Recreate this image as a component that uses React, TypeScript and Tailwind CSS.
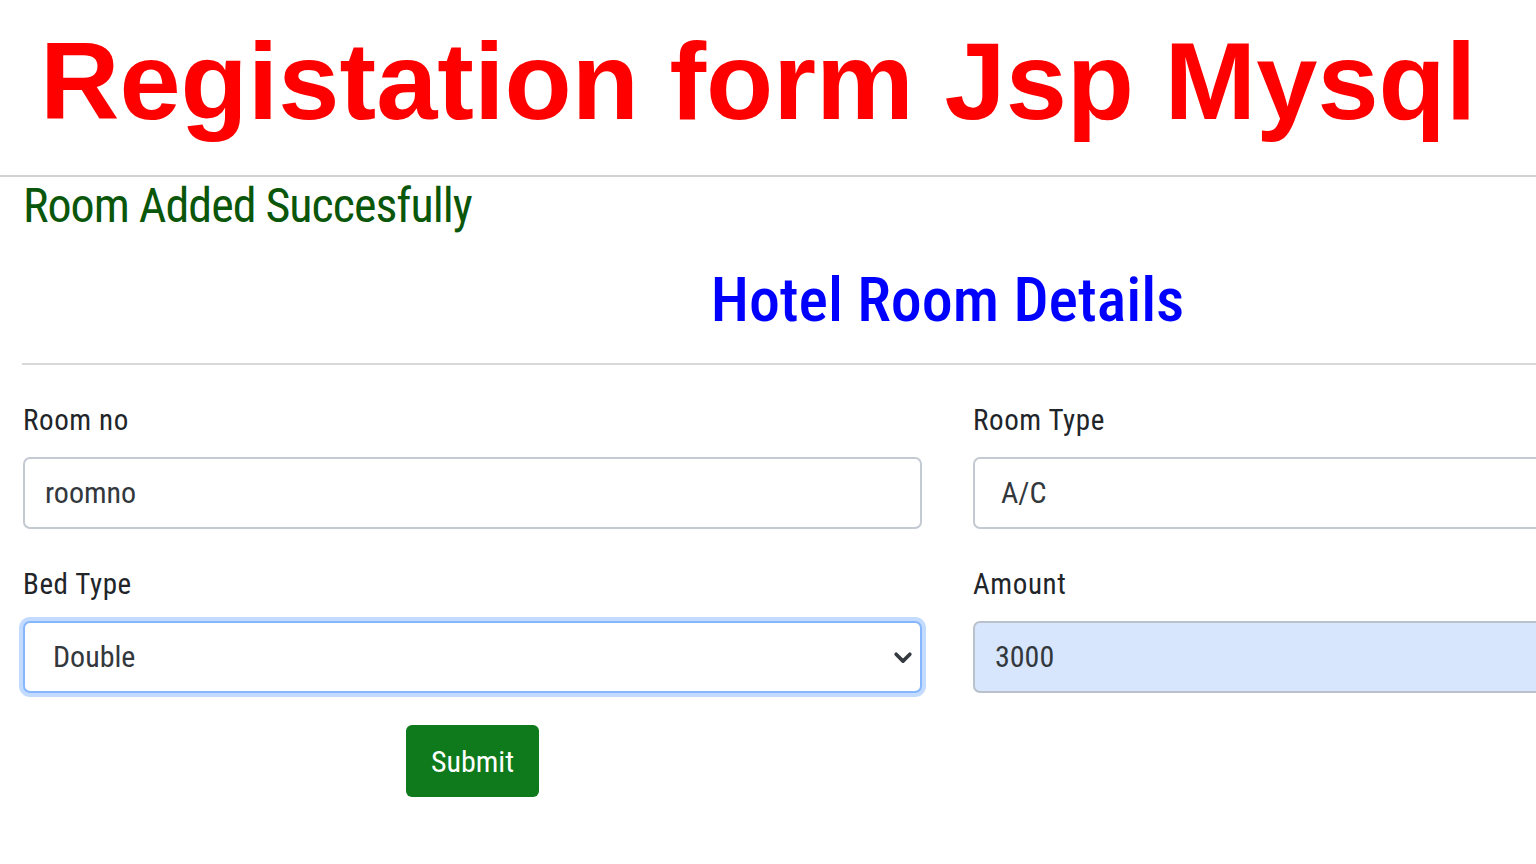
import React from "react";

const ui = { fontFamily: 'Roboto, "Open Sans", sans-serif' };

function Field({
  label,
  value,
  pad,
  bg,
  focus,
  select,
}: {
  label: string;
  value: string;
  pad: string;
  bg?: boolean;
  focus?: boolean;
  select?: boolean;
}) {
  return (
    <div className="flex flex-col">
      <div className="text-[29px] leading-none h-[28px] text-[#212529] font-stretch-condensed tracking-[0.6px]">{label}</div>
      <div
        className={
          "mt-[23px] h-[72px] rounded-[7px] flex items-center relative " +
          (focus
            ? "border-2 border-[#86b7fe] shadow-[0_0_0_4px_rgba(13,110,253,0.25)] bg-white"
            : bg
            ? "border-2 border-[#b9c1ca] bg-[#d8e6fd]"
            : "border-2 border-[#c4cad2] bg-white")
        }
      >
        <span className={"text-[30px] leading-none text-[#33383d] font-stretch-condensed " + pad}>{value}</span>
        {select && (
          <svg
            className="absolute right-[6px] top-1/2 -translate-y-1/2"
            width="22"
            height="22"
            viewBox="0 0 16 16"
          >
            <path
              d="M3 6l5 5 5-5"
              fill="none"
              stroke="#343a40"
              strokeWidth="2.6"
              strokeLinecap="round"
              strokeLinejoin="round"
            />
          </svg>
        )}
      </div>
    </div>
  );
}

export default function App() {
  return (
    <div className="w-[1536px] h-[864px] overflow-hidden bg-white">
      <div
        className="pt-[26px] pl-[40px] text-[110px] leading-[110px] font-bold text-[#ff0000] whitespace-nowrap"
        style={{ fontFamily: '"Liberation Sans", Arial, sans-serif' }}
      >
        Registation form Jsp Mysql
      </div>
      <div className="mt-[39px] h-[2px] bg-[#d2d2d2] w-full" />
      <div className="w-[1849px] ml-[23px]" style={ui}>
        <div className="text-[48px] leading-none h-[48px] text-[#0a560a] font-stretch-condensed tracking-[-1px] mt-[5px]">
          Room Added Succesfully
        </div>
        <div className="text-center text-[62px] leading-none h-[62px] text-[#0000ff] font-medium font-stretch-condensed mt-[39px]">
          Hotel Room Details
        </div>
        <div className="mt-[32px] h-[2px] bg-[#d8d8d8] -ml-[1px]" />
        <div className="grid grid-cols-2 gap-x-[51px] mt-[41px]">
          <Field label="Room no" value="roomno" pad="pl-[20px]" />
          <Field label="Room Type" value="A/C" pad="pl-[26px]" />
          <div className="mt-[41px]">
            <Field label="Bed Type" value="Double" pad="pl-[28px]" focus select />
          </div>
          <div className="mt-[41px]">
            <Field label="Amount" value="3000" pad="pl-[20px]" bg />
          </div>
          <div className="flex justify-center mt-[32px]">
            <div className="w-[133px] h-[72px] rounded-[6px] bg-[#0e7a1c] text-white text-[30px] font-stretch-condensed flex items-center justify-center">
              Submit
            </div>
          </div>
        </div>
      </div>
    </div>
  );
}
